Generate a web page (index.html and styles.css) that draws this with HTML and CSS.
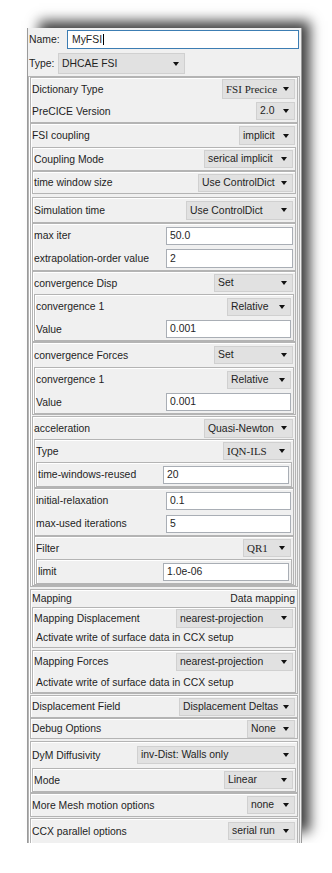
FILE: index.html
```html
<!DOCTYPE html>
<html lang="en">
<head>
  <meta charset="UTF-8" />
  <title>DHCAE FSI</title>
  <link rel="stylesheet" href="styles.css">
</head>
<body>
  <div class="panel">
    <div class="row top name-row">
      <span class="lbl">Name:</span>
      <div class="field name-field">MyFSI<span class="caret"></span></div>
    </div>
    <div class="row top type-row">
      <span class="lbl">Type:</span>
      <div class="combo c21 w127">DHCAE FSI</div>
    </div>

    <div class="frame outer">
      <div class="frame">
        <div class="row h22"><span>Dictionary Type</span><div class="combo serif c20 w73">FSI Precice</div></div>
        <div class="row h22"><span>PreCICE Version</span><div class="combo w39">2.0</div></div>
      </div>

      <div class="frame">
        <div class="row h23"><span>FSI coupling</span><div class="combo c19 w56">implicit</div></div>
        <div class="frame">
          <div class="row h22"><span>Coupling Mode</span><div class="combo w89">serical implicit</div></div>
        </div>
        <div class="frame">
          <div class="row h21"><span>time window size</span><div class="combo w95">Use ControlDict</div></div>
        </div>
        <div class="frame mt3">
          <div class="row h24"><span>Simulation time</span><div class="combo c19 w107">Use ControlDict</div></div>
        </div>
        <div class="frame">
          <div class="row h23"><span>max iter</span><div class="field w127">50.0</div></div>
          <div class="row h23"><span>extrapolation-order value</span><div class="field f19 w127">2</div></div>
        </div>

        <div class="frame">
          <div class="row h22"><span>convergence Disp</span><div class="combo w79">Set</div></div>
          <div class="frame">
            <div class="row h23"><span>convergence 1</span><div class="combo w64">Relative</div></div>
            <div class="row h22"><span>Value</span><div class="field w125">0.001</div></div>
          </div>
        </div>

        <div class="frame">
          <div class="row h24"><span>convergence Forces</span><div class="combo w79">Set</div></div>
          <div class="frame">
            <div class="row h23"><span>convergence 1</span><div class="combo w64">Relative</div></div>
            <div class="row h22"><span>Value</span><div class="field w125">0.001</div></div>
          </div>
        </div>

        <div class="frame mt1">
          <div class="row h22"><span>acceleration</span><div class="combo c19 w89">Quasi-Newton</div></div>
          <div class="frame">
            <div class="row h22"><span>Type</span><div class="combo serif w68">IQN-ILS</div></div>
            <div class="frame">
              <div class="row h23"><span>time-windows-reused</span><div class="field w126">20</div></div>
            </div>
          </div>
          <div class="frame">
            <div class="row h23"><span>initial-relaxation</span><div class="field w125">0.1</div></div>
            <div class="row h23"><span>max-used iterations</span><div class="field w125">5</div></div>
          </div>
          <div class="frame">
            <div class="row h22"><span>Filter</span><div class="combo serif w48">QR1</div></div>
            <div class="frame">
              <div class="row h23"><span>limit</span><div class="field w126">1.0e-06</div></div>
            </div>
          </div>
        </div>
      </div>

      <div class="frame mt2">
        <div class="row h17"><span>Mapping</span><span>Data mapping</span></div>
        <div class="frame">
          <div class="row h20"><span>Mapping Displacement</span><div class="combo c19 w117">nearest-projection</div></div>
          <div class="row h19 note">Activate write of surface data in CCX setup</div>
        </div>
        <div class="frame mt2">
          <div class="row h21"><span>Mapping Forces</span><div class="combo w117">nearest-projection</div></div>
          <div class="row h20 note">Activate write of surface data in CCX setup</div>
        </div>
      </div>

      <div class="frame mt1">
        <div class="row h21"><span>Displacement Field</span><div class="combo w116">Displacement Deltas</div></div>
      </div>
      <div class="frame">
        <div class="row h19"><span>Debug Options</span><div class="combo w48">None</div></div>
      </div>

      <div class="frame mt2">
        <div class="row h26"><span>DyM Diffusivity</span><div class="combo w158">inv-Dist: Walls only</div></div>
        <div class="frame">
          <div class="row h22"><span>Mode</span><div class="combo w69">Linear</div></div>
        </div>
      </div>

      <div class="frame">
        <div class="row h22"><span>More Mesh motion options</span><div class="combo w48">none</div></div>
      </div>
      <div class="frame mt1">
        <div class="row h24"><span>CCX parallel options</span><div class="combo w67">serial run</div></div>
      </div>
    </div>
  </div>
</body>
</html>
```

FILE: styles.css
```css
body {
  margin: 0;
  background: #ffffff;
  font-family: "Liberation Sans", Arial, sans-serif;
  font-size: 10.4px;
  color: #1e1e1e;
}

.panel {
  margin: 28px 0 0 27px;
  width: 275px;
  height: 815px;
  box-sizing: border-box;
  background: #f0f0f0;
  border-left: 1px solid #9a9a9a;
  border-right: 1px solid #9a9a9a;
  box-shadow: 10px -9px 12px -2px rgba(0, 0, 0, 0.75);
  overflow: hidden;
}

.row {
  display: flex;
  align-items: center;
  justify-content: space-between;
  padding: 0 2px 0 1px;
  box-sizing: border-box;
  white-space: nowrap;
}

.row.top {
  justify-content: flex-start;
}

.name-row { height: 23px; }
.type-row { height: 25px; }
.name-row .lbl { width: 38px; }
.type-row .lbl { width: 29px; }

.h17 { height: 17px; }
.h19 { height: 19px; }
.h20 { height: 20px; }
.h21 { height: 21px; }
.h22 { height: 22px; }
.h23 { height: 23px; }
.h24 { height: 24px; }
.h26 { height: 26px; }

.note {
  padding-left: 3px;
}

.frame {
  border: 1px solid #b4b4b4;
  box-shadow: inset 1px 1px 0 #ffffff;
  margin: 0 1px;
}

.frame.outer {
  margin: 0 1px 0 0;
}

.mt1 { margin-top: 1px; }
.mt2 { margin-top: 2px; }
.mt3 { margin-top: 3px; }

/* combo boxes */
.combo {
  position: relative;
  height: 18px;
  line-height: 16px;
  box-sizing: border-box;
  padding-left: 3px;
  background: #e1e1e1;
  border: 1px solid #d0d0d0;
  flex: none;
}

.combo::after {
  content: "";
  position: absolute;
  right: 5px;
  top: 50%;
  margin-top: -2px;
  border-left: 3.5px solid transparent;
  border-right: 3.5px solid transparent;
  border-top: 4px solid #111;
}

.combo.serif {
  font-family: "Liberation Serif", "Times New Roman", serif;
  font-size: 11px;
}

.c19 { height: 19px; line-height: 17px; }
.c20 { height: 20px; line-height: 18px; }
.c21 { height: 21px; line-height: 19px; }

/* line edits */
.field {
  height: 18px;
  line-height: 16px;
  box-sizing: border-box;
  padding-left: 3px;
  background: #ffffff;
  border: 1px solid #a9aeb5;
  flex: none;
}

.f19 { height: 19px; line-height: 17px; }

.name-field {
  flex: 1;
  height: 19px;
  line-height: 17px;
  border-color: #3c7db3;
  padding-left: 4px;
}

.caret {
  display: inline-block;
  width: 1px;
  height: 11px;
  background: #000;
  vertical-align: -2px;
  margin-left: 1px;
}

.w39 { width: 39px; }
.w48 { width: 48px; }
.w56 { width: 56px; }
.w64 { width: 64px; }
.w67 { width: 67px; }
.w68 { width: 68px; }
.w69 { width: 69px; }
.w73 { width: 73px; }
.w79 { width: 79px; }
.w89 { width: 89px; }
.w95 { width: 95px; }
.w107 { width: 107px; }
.w116 { width: 116px; }
.w117 { width: 117px; }
.w125 { width: 125px; }
.w126 { width: 126px; }
.w127 { width: 127px; }
.w158 { width: 158px; }
```
